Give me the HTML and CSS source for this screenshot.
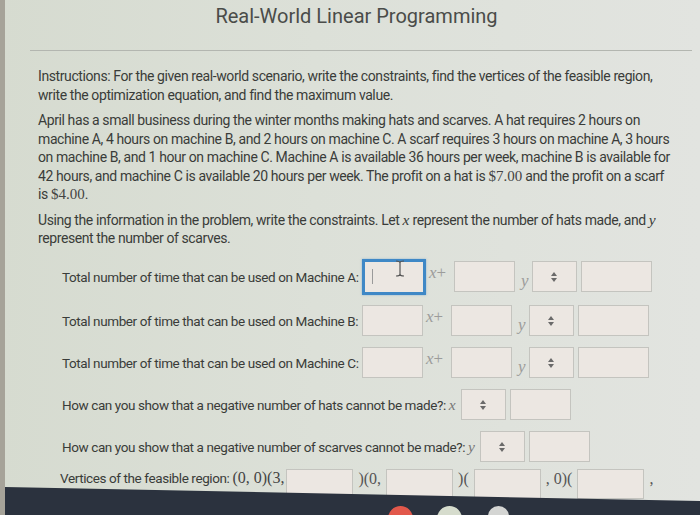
FILE: index.html
```html
<!DOCTYPE html>
<html lang="en">
<head>
<meta charset="utf-8">
<title>Real-World Linear Programming</title>
<link rel="stylesheet" href="styles.css">
</head>
<body>
<div class="screen">
  <header class="top">
    <h1 class="title">Real-World Linear Programming</h1>
  </header>
  <hr class="rule">
  <main class="content">
    <p class="para">Instructions: For the given real-world scenario, write the constraints, find the vertices of the feasible region,<br>write the optimization equation, and find the maximum value.</p>
    <p class="para">April has a small business during the winter months making hats and scarves. A hat requires 2 hours on<br>machine A, 4 hours on machine B, and 2 hours on machine C. A scarf requires 3 hours on machine A, 3 hours<br>on machine B, and 1 hour on machine C. Machine A is available 36 hours per week, machine B is available for<br>42 hours, and machine C is available 20 hours per week. The profit on a hat is <span class="mn">$7.00</span> and the profit on a scarf<br>is <span class="mn">$4.00</span>.</p>
    <p class="para">Using the information in the problem, write the constraints. Let <i class="mi">x</i> represent the number of hats made, and <i class="mi">y</i><br>represent the number of scarves.</p>

    <div class="rows">
      <div class="row">
        <span class="label label-machine">Total number of time that can be used on Machine A:</span>
        <span class="box box-coef box-focus"><span class="caret"></span>
          <svg class="ibeam" width="10" height="17" viewBox="0 0 10 17"><path d="M1 1 Q5 1 5 3 Q5 1 9 1 M5 3 V14 M1 16 Q5 16 5 14 Q5 16 9 16" fill="none" stroke="#555" stroke-width="1.2"/></svg>
        </span>
        <span class="var var-x"><i class="mi">x</i>+</span>
        <span class="box box-coef"></span>
        <span class="var var-y"><i class="mi">y</i></span>
        <span class="box box-select"><svg class="updown" width="6" height="10" viewBox="0 0 6 10"><path d="M3 0L6 4H0Z M3 10L0 6H6Z" fill="#6a6a6a"/></svg></span>
        <span class="box box-const"></span>
      </div>
      <div class="row">
        <span class="label label-machine">Total number of time that can be used on Machine B:</span>
        <span class="box box-coef"></span>
        <span class="var var-x"><i class="mi">x</i>+</span>
        <span class="box box-coef"></span>
        <span class="var var-y"><i class="mi">y</i></span>
        <span class="box box-select"><svg class="updown" width="6" height="10" viewBox="0 0 6 10"><path d="M3 0L6 4H0Z M3 10L0 6H6Z" fill="#6a6a6a"/></svg></span>
        <span class="box box-const"></span>
      </div>
      <div class="row">
        <span class="label label-machine">Total number of time that can be used on Machine C:</span>
        <span class="box box-coef"></span>
        <span class="var var-x"><i class="mi">x</i>+</span>
        <span class="box box-coef"></span>
        <span class="var var-y"><i class="mi">y</i></span>
        <span class="box box-select"><svg class="updown" width="6" height="10" viewBox="0 0 6 10"><path d="M3 0L6 4H0Z M3 10L0 6H6Z" fill="#6a6a6a"/></svg></span>
        <span class="box box-const"></span>
      </div>
      <div class="row">
        <span class="label">How can you show that a negative number of hats cannot be made?: <i class="mi mi-soft">x</i></span>
        <span class="box box-select"><svg class="updown" width="6" height="10" viewBox="0 0 6 10"><path d="M3 0L6 4H0Z M3 10L0 6H6Z" fill="#6a6a6a"/></svg></span>
        <span class="box box-coef"></span>
      </div>
      <div class="row">
        <span class="label">How can you show that a negative number of scarves cannot be made?: <i class="mi mi-soft">y</i></span>
        <span class="box box-select"><svg class="updown" width="6" height="10" viewBox="0 0 6 10"><path d="M3 0L6 4H0Z M3 10L0 6H6Z" fill="#6a6a6a"/></svg></span>
        <span class="box box-coef"></span>
      </div>
      <div class="row row-vertices">
        <span class="label">Vertices of the feasible region: <span class="mn">(0, 0)(3,</span></span>
        <span class="box box-vert"></span>
        <span class="mn sep">)(0,</span>
        <span class="box box-vert"></span>
        <span class="mn sep">)(</span>
        <span class="box box-vert"></span>
        <span class="mn sep">, 0)(</span>
        <span class="box box-vert"></span>
        <span class="mn sep">,</span>
      </div>
    </div>
  </main>
  <footer class="taskbar">
    <span class="dot dot-red"></span>
    <span class="dot dot-pale"></span>
    <span class="dot dot-grey"></span>
  </footer>
</div>
</body>
</html>
```
FILE: styles.css
```css
* { box-sizing: border-box; }

html, body {
  margin: 0;
  padding: 0;
}

body {
  width: 700px;
  height: 515px;
  overflow: hidden;
  font-family: Roboto, "Liberation Sans", sans-serif;
  color: #3a3c39;
  background: linear-gradient(90deg, #d6dbd0 0%, #dce0d8 45%, #e2e4e0 100%);
}

.screen {
  height: 515px;
  border-left: 5px solid #a6a399;
  position: relative;
  overflow: hidden;
}

.top {
  padding: 4px 0 0 8px;
}

.title {
  margin: 0;
  text-align: center;
  font-size: 20px;
  line-height: 24px;
  font-weight: 400;
  color: #4a4c49;
}

.rule {
  margin: 22px 8px 0 25px;
  border: 0;
  border-top: 1px solid #b3b6b0;
  height: 0;
}

.content {
  padding: 16px 0 0 33px;
}

.para {
  margin: 0 0 7px;
  font-size: 14px;
  line-height: 18.5px;
  letter-spacing: -0.4px;
  white-space: nowrap;
}

.mi {
  font-family: "Liberation Serif", "DejaVu Serif", serif;
  font-style: italic;
  font-size: 15.5px;
  letter-spacing: 0;
}

.mi-soft { color: #777; }

.mn {
  font-family: "Liberation Serif", "DejaVu Serif", serif;
  font-size: 15px;
  letter-spacing: 0;
  color: #444;
}

.rows {
  display: flex;
  flex-direction: column;
  gap: 10px;
  margin-top: 11px;
  padding-left: 24px;
}

.row {
  display: flex;
  align-items: center;
  min-height: 32px;
}

.label {
  font-size: 13.5px;
  letter-spacing: -0.4px;
  white-space: nowrap;
  margin-right: 5px;
}

.label-machine {
  width: 300px;
  margin-right: 0;
}

.box {
  display: inline-flex;
  align-items: center;
  justify-content: center;
  height: 31px;
  background: #ece7e2;
  border: 1px solid #c4c4bf;
  position: relative;
}

.box-coef { width: 61px; }
.box-select { width: 45px; }
.box-const { width: 71px; }
.box-vert { width: 67px; height: 30px; }

.box-focus {
  width: 64px;
  height: 36px;
  border: 3px solid #3f88c6;
  box-shadow: 0 0 2px rgba(63, 136, 198, 0.5);
  justify-content: flex-start;
}

.caret {
  display: block;
  width: 1px;
  height: 15px;
  margin-left: 7px;
  background: #9a9a9a;
}

.ibeam {
  position: absolute;
  left: 30px;
  top: -2px;
}

.var {
  font-family: "Liberation Serif", "DejaVu Serif", serif;
  color: #9c9c9a;
  font-size: 17px;
}

.var .mi { color: #9c9c9a; font-size: 17px; }

.var-x {
  margin: -8px 4px 0 3px;
  width: 21px;
}

.var-y {
  margin: 8px 3px 0 6px;
}

.box-select + .box { margin-left: 4px; }

.row-vertices { margin-top: -5px; margin-left: -2px; }
.row-vertices .label { margin-right: 2px; margin-bottom: 12px; }
.row-vertices .label .mn { font-size: 16px; }

.sep {
  margin: 0 5px 10px;
  font-size: 16px;
  color: #555;
}

.taskbar {
  position: absolute;
  left: -5px;
  right: 0;
  bottom: 0;
  height: 28px;
  background: #2b323e;
  clip-path: polygon(0 0, 100% 14px, 100% 100%, 0 100%);
  display: flex;
  align-items: flex-start;
  gap: 24px;
  padding: 19px 0 0 388px;
}

.dot {
  flex: none;
  width: 25px;
  height: 25px;
  border-radius: 50%;
}

.dot-red { background: #e2584b; }
.dot-pale { background: #d6dccd; }
.dot-grey { background: #d4d5d3; width: 21px; height: 21px; margin-left: 2px; }
```
